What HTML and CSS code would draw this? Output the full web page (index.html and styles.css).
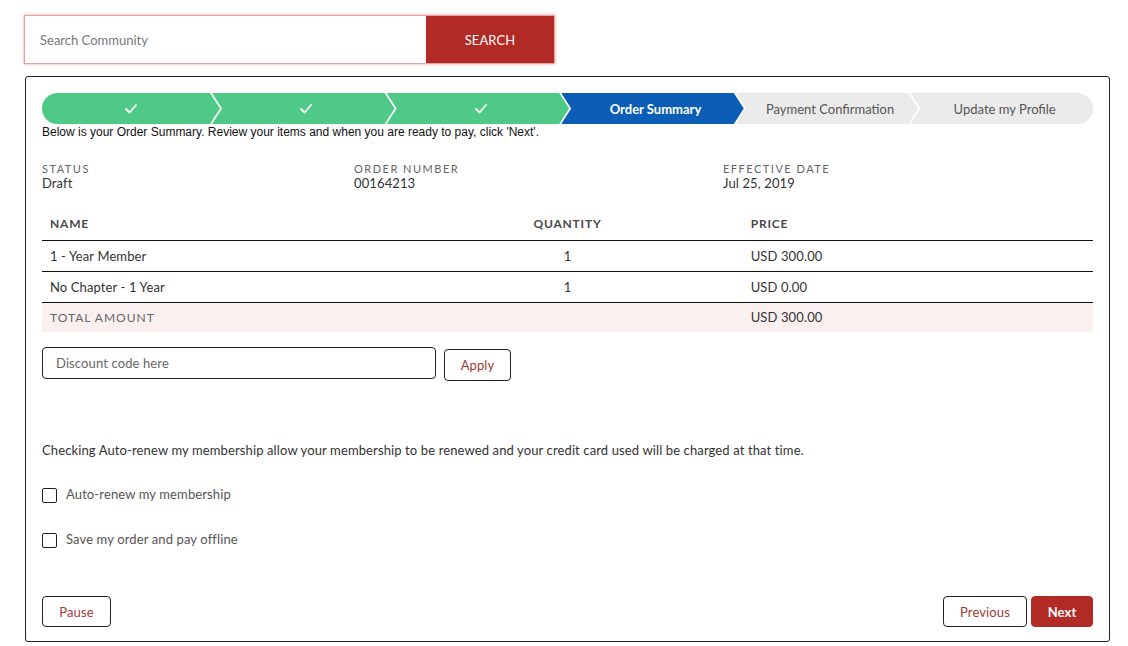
FILE: index.html
```html
<!DOCTYPE html>
<html lang="en">

<head>
    <meta charset="UTF-8">
    <meta name="viewport" content="width=device-width, initial-scale=1.0">
    <title>Order Summary</title>
    <link rel="stylesheet" href="styles.css">
</head>

<body>
    <div class="search">
        <input class="search-input" type="text" placeholder="Search Community">
        <div class="search-btn">SEARCH</div>
    </div>

    <div class="card">
        <div class="steps">
            <div class="step done first">
                <svg width="14" height="11" viewBox="0 0 14 11"><path d="M1.5 5.5 L5.5 9.5 L12.5 1.5" fill="none" stroke="#fff" stroke-width="1.8"/></svg>
            </div>
            <div class="step done">
                <svg width="14" height="11" viewBox="0 0 14 11"><path d="M1.5 5.5 L5.5 9.5 L12.5 1.5" fill="none" stroke="#fff" stroke-width="1.8"/></svg>
            </div>
            <div class="step done">
                <svg width="14" height="11" viewBox="0 0 14 11"><path d="M1.5 5.5 L5.5 9.5 L12.5 1.5" fill="none" stroke="#fff" stroke-width="1.8"/></svg>
            </div>
            <div class="step active">Order Summary</div>
            <div class="step">Payment Confirmation</div>
            <div class="step last">Update my Profile</div>
        </div>
        <p class="intro">Below is your Order Summary. Review your items and when you are ready to pay, click 'Next'.</p>

        <div class="info">
            <div class="info-item status">
                <div class="label">STATUS</div>
                <div class="value">Draft</div>
            </div>
            <div class="info-item number">
                <div class="label">ORDER NUMBER</div>
                <div class="value">00164213</div>
            </div>
            <div class="info-item">
                <div class="label">EFFECTIVE DATE</div>
                <div class="value">Jul 25, 2019</div>
            </div>
        </div>

        <table class="items">
            <thead>
                <tr>
                    <th>NAME</th>
                    <th class="qty">QUANTITY</th>
                    <th>PRICE</th>
                </tr>
            </thead>
            <tbody>
                <tr>
                    <td>1 - Year Member</td>
                    <td class="qty">1</td>
                    <td>USD 300.00</td>
                </tr>
                <tr>
                    <td>No Chapter - 1 Year</td>
                    <td class="qty">1</td>
                    <td>USD 0.00</td>
                </tr>
                <tr class="total">
                    <td>TOTAL AMOUNT</td>
                    <td></td>
                    <td>USD 300.00</td>
                </tr>
            </tbody>
        </table>

        <div class="discount">
            <input class="discount-input" type="text" placeholder="Discount code here">
            <div class="btn apply">Apply</div>
        </div>

        <p class="note">Checking Auto-renew my membership allow your membership to be renewed and your credit card used will be charged at that time.</p>

        <label class="check"><span class="box"></span>Auto-renew my membership</label>
        <label class="check second"><span class="box"></span>Save my order and pay offline</label>

        <div class="actions">
            <div class="btn pause">Pause</div>
            <div class="right">
                <div class="btn">Previous</div>
                <div class="btn next">Next</div>
            </div>
        </div>
    </div>
</body>

</html>
```

FILE: styles.css
```css
* {
    margin: 0;
    padding: 0;
    box-sizing: border-box;
}

body {
    font-family: Lato, "Open Sans", sans-serif;
    font-size: 13px;
    letter-spacing: 0.12px;
    color: #333;
    background: #fff;
    padding: 15px 18px 0 24px;
}

.search {
    display: flex;
    width: 531px;
    height: 49px;
    border: 1px solid #e3a5a2;
    box-shadow: 0 0 3px rgba(178, 42, 36, 0.45);
}

.search-input {
    flex: 1;
    border: none;
    outline: none;
    padding-left: 15px;
    font-family: inherit;
    font-size: 13px;
    color: #333;
}

.search-input::placeholder {
    color: #777;
}

.search-btn {
    width: 128px;
    background-color: #b22a25;
    color: #fff;
    font-size: 13px;
    display: flex;
    align-items: center;
    justify-content: center;
}

.card {
    margin: 12px 0 0 1px;
    width: 1085px;
    height: 566px;
    border: 1px solid #222;
    border-radius: 3px;
    padding: 16px 16px 0 16px;
    display: flex;
    flex-direction: column;
}

.steps {
    display: flex;
    height: 31px;
}

.step {
    flex: 1;
    display: flex;
    align-items: center;
    justify-content: center;
    background-color: #ebebeb;
    color: #555;
    font-size: 13px;
    letter-spacing: 0;
    margin-left: -8px;
    padding-left: 6px;
    clip-path: polygon(0 0, calc(100% - 10px) 0, 100% 50%, calc(100% - 10px) 100%, 0 100%, 10px 50%);
}

.step.first {
    flex: 0 0 178px;
    margin-left: 0;
    padding-left: 0;
    border-radius: 16px 0 0 16px;
    clip-path: polygon(0 0, calc(100% - 10px) 0, 100% 50%, calc(100% - 10px) 100%, 0 100%);
}

.step.last {
    border-radius: 0 16px 16px 0;
    clip-path: polygon(0 0, 100% 0, 100% 100%, 0 100%, 10px 50%);
}

.step.done {
    background-color: #4fca86;
}

.step.active {
    background-color: #0b5db6;
    color: #fff;
    font-weight: 700;
}

.intro {
    font-family: "Liberation Sans", Arial, sans-serif;
    font-size: 12px;
    letter-spacing: 0;
    color: #111;
    margin-top: 1px;
    line-height: 14px;
}

.info {
    display: flex;
    margin-top: 23px;
}

.info-item {
    width: 312px;
}

.info-item.number {
    width: 369px;
}

.label {
    font-size: 11px;
    letter-spacing: 1.5px;
    color: #666;
    line-height: 14px;
}

.value {
    font-size: 13px;
    color: #333;
    line-height: 15px;
}

.items {
    width: 100%;
    border-collapse: collapse;
    margin-top: 16px;
    table-layout: fixed;
}

.items th {
    text-align: left;
    font-size: 12px;
    font-weight: 700;
    letter-spacing: 0.8px;
    color: #4a4a4a;
    height: 33px;
    padding: 0 8px;
    border-bottom: 1px solid #111;
}

.items td {
    height: 31px;
    padding: 0 8px;
    border-bottom: 1px solid #111;
    color: #333;
}

.items .qty {
    text-align: center;
}

.items tr.total td {
    border-bottom: none;
    background-color: #fbf0f0;
    height: 30px;
}

.items tr.total td:first-child {
    font-size: 12px;
    letter-spacing: 1px;
    color: #666;
}

.discount {
    display: flex;
    align-items: flex-start;
    margin-top: 15px;
}

.discount-input {
    width: 394px;
    height: 32px;
    border: 1px solid #222;
    border-radius: 4px;
    padding-left: 13px;
    font-family: inherit;
    font-size: 13px;
    letter-spacing: 0.12px;
    outline: none;
}

.discount-input::placeholder {
    color: #666;
}

.btn {
    height: 32px;
    padding: 0 16px;
    border: 1px solid #222;
    border-radius: 4px;
    color: #9d3b37;
    display: flex;
    align-items: center;
    justify-content: center;
    font-size: 13px;
    background: #fff;
}

.apply {
    margin: 2px 0 0 8px;
    width: 67px;
}

.note {
    margin-top: 61px;
    line-height: 16px;
    color: #333;
}

.check {
    display: flex;
    align-items: center;
    margin-top: 26px;
    color: #555;
    line-height: 16px;
}

.check.second {
    margin-top: 26px;
}

.box {
    width: 15px;
    height: 15px;
    border: 1.5px solid #222;
    border-radius: 2px;
    margin: 4px 9px 0 0;
}

.actions {
    display: flex;
    justify-content: space-between;
    margin-top: 48px;
}

.actions .btn {
    height: 31px;
}

.btn.pause {
    width: 69px;
}

.right {
    display: flex;
    gap: 4px;
}

.right .btn {
    width: 84px;
}

.right .btn.next {
    width: 62px;
    background-color: #b22a25;
    border-color: #b22a25;
    color: #fff;
    font-weight: 700;
}
```
